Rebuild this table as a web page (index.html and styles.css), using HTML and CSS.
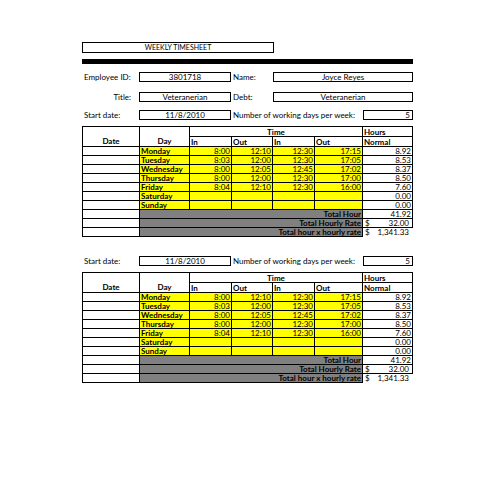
FILE: index.html
```html
<!DOCTYPE html>
<html>
<head>
<meta charset="utf-8">
<link rel="stylesheet" href="styles.css">
</head>
<body>
<div class="sheet">
  <div class="title-box">WEEKLY TIMESHEET</div>
  <div class="bar"></div>

  <div class="info info-a">
    <div class="lbl">Employee ID:</div>
    <div class="box">3801718</div>
    <div class="lbl lbl2">Name:</div>
    <div class="box">Joyce Reyes</div>
  </div>
  <div class="info info-a gap-title">
    <div class="lbl right">Title:</div>
    <div class="box">Veteranerian</div>
    <div class="lbl lbl2">Debt:</div>
    <div class="box">Veteranerian</div>
  </div>
  <div class="info info-b gap-start">
    <div class="lbl">Start date:</div>
    <div class="box">11/8/2010</div>
    <div class="lbl lbl2">Number of working days per week:</div>
    <div class="box num">5</div>
  </div>

  <div class="ts">
    <div class="c hd date-h">Date</div>
    <div class="c hd day-h">Day</div>
    <div class="c hd time-h">Time</div>
    <div class="c hd left">Hours</div>
    <div class="c hd left">In</div>
    <div class="c hd left">Out</div>
    <div class="c hd left">In</div>
    <div class="c hd left">Out</div>
    <div class="c hd left">Normal</div>

    <div class="c"></div><div class="c y day">Monday</div><div class="c y n">8:00</div><div class="c y n">12:10</div><div class="c y n">12:30</div><div class="c y n">17:15</div><div class="c n">8.92</div>
    <div class="c"></div><div class="c y day">Tuesday</div><div class="c y n">8:03</div><div class="c y n">12:00</div><div class="c y n">12:30</div><div class="c y n">17:05</div><div class="c n">8.53</div>
    <div class="c"></div><div class="c y day">Wednesday</div><div class="c y n">8:00</div><div class="c y n">12:05</div><div class="c y n">12:45</div><div class="c y n">17:02</div><div class="c n">8.37</div>
    <div class="c"></div><div class="c y day">Thursday</div><div class="c y n">8:00</div><div class="c y n">12:00</div><div class="c y n">12:30</div><div class="c y n">17:00</div><div class="c n">8.50</div>
    <div class="c"></div><div class="c y day">Friday</div><div class="c y n">8:04</div><div class="c y n">12:10</div><div class="c y n">12:30</div><div class="c y n">16:00</div><div class="c n">7.60</div>
    <div class="c"></div><div class="c y day">Saturday</div><div class="c y"></div><div class="c y"></div><div class="c y"></div><div class="c y"></div><div class="c n">0.00</div>
    <div class="c"></div><div class="c y day">Sunday</div><div class="c y"></div><div class="c y"></div><div class="c y"></div><div class="c y"></div><div class="c n">0.00</div>

    <div class="c"></div><div class="c g">Total Hour</div><div class="c n pr">41.92</div>
    <div class="c"></div><div class="c g">Total Hourly Rate</div><div class="c acc"><span>$</span><span>32.00</span></div>
    <div class="c"></div><div class="c g">Total hour x hourly rate</div><div class="c acc nob"><span>$</span><span>1,341.33</span></div>
  </div>

  <div class="info info-b gap-start2">
    <div class="lbl">Start date:</div>
    <div class="box">11/8/2010</div>
    <div class="lbl lbl2">Number of working days per week:</div>
    <div class="box num">5</div>
  </div>

  <div class="ts">
    <div class="c hd date-h">Date</div>
    <div class="c hd day-h">Day</div>
    <div class="c hd time-h">Time</div>
    <div class="c hd left">Hours</div>
    <div class="c hd left">In</div>
    <div class="c hd left">Out</div>
    <div class="c hd left">In</div>
    <div class="c hd left">Out</div>
    <div class="c hd left">Normal</div>

    <div class="c"></div><div class="c y day">Monday</div><div class="c y n">8:00</div><div class="c y n">12:10</div><div class="c y n">12:30</div><div class="c y n">17:15</div><div class="c n">8.92</div>
    <div class="c"></div><div class="c y day">Tuesday</div><div class="c y n">8:03</div><div class="c y n">12:00</div><div class="c y n">12:30</div><div class="c y n">17:05</div><div class="c n">8.53</div>
    <div class="c"></div><div class="c y day">Wednesday</div><div class="c y n">8:00</div><div class="c y n">12:05</div><div class="c y n">12:45</div><div class="c y n">17:02</div><div class="c n">8.37</div>
    <div class="c"></div><div class="c y day">Thursday</div><div class="c y n">8:00</div><div class="c y n">12:00</div><div class="c y n">12:30</div><div class="c y n">17:00</div><div class="c n">8.50</div>
    <div class="c"></div><div class="c y day">Friday</div><div class="c y n">8:04</div><div class="c y n">12:10</div><div class="c y n">12:30</div><div class="c y n">16:00</div><div class="c n">7.60</div>
    <div class="c"></div><div class="c y day">Saturday</div><div class="c y"></div><div class="c y"></div><div class="c y"></div><div class="c y"></div><div class="c n">0.00</div>
    <div class="c"></div><div class="c y day">Sunday</div><div class="c y"></div><div class="c y"></div><div class="c y"></div><div class="c y"></div><div class="c n">0.00</div>

    <div class="c"></div><div class="c g">Total Hour</div><div class="c n pr">41.92</div>
    <div class="c"></div><div class="c g">Total Hourly Rate</div><div class="c acc"><span>$</span><span>32.00</span></div>
    <div class="c"></div><div class="c g">Total hour x hourly rate</div><div class="c acc nob"><span>$</span><span>1,341.33</span></div>
  </div>
</div>
</body>
</html>
```

FILE: styles.css
```css
html, body {
  margin: 0;
  padding: 0;
  background: #ffffff;
}
body {
  font-family: Lato, "Liberation Sans", sans-serif;
  font-size: 8px;
  color: #000;
}
.sheet {
  margin-left: 82px;
  padding-top: 42px;
  width: 331px;
}
.title-box {
  box-sizing: border-box;
  width: 192px;
  height: 11px;
  border: 1px solid #000;
  text-align: center;
  font-size: 7px;
  line-height: 9px;
}
.bar {
  margin-top: 6px;
  height: 5px;
  background: #000;
}
.info {
  display: grid;
  height: 10px;
  margin-top: 8px;
}
.info-a { grid-template-columns: 57px 92px 42px 140px; }
.info-b { grid-template-columns: 57px 92px 132px 50px; }
.gap-title { margin-top: 10px; }
.gap-start { margin-top: 8px; }
.gap-start2 { margin-top: 19px; }
.lbl {
  line-height: 10px;
  padding-left: 2px;
  white-space: nowrap;
}
.lbl.right {
  text-align: right;
  padding: 0 8px 0 0;
}
.lbl2 { padding-left: 2px; }
.box {
  box-sizing: border-box;
  border: 1px solid #000;
  text-align: center;
  line-height: 8px;
}
.box.num {
  text-align: right;
  padding-right: 2px;
}
.ts {
  display: grid;
  grid-template-columns: 57px 50px 42px 41px 42px 48px 50px;
  grid-template-rows: 10px 10px repeat(10, 9px);
  border-top: 1px solid #000;
  border-left: 1px solid #000;
  margin-top: 6px;
  width: 331px;
  box-sizing: border-box;
}
.c {
  box-sizing: border-box;
  border-right: 1px solid #000;
  border-bottom: 1px solid #000;
  display: flex;
  align-items: center;
  padding: 0 1px;
  white-space: nowrap;
  overflow: hidden;
  line-height: 8px;
}
.hd { font-weight: bold; }
.left { justify-content: flex-start; }
.date-h {
  grid-row: 1 / 3;
  grid-column: 1;
  align-items: flex-end;
  justify-content: center;
  padding-bottom: 1px;
}
.day-h {
  grid-row: 1 / 3;
  grid-column: 2;
  align-items: flex-end;
  justify-content: center;
  padding-bottom: 1px;
}
.time-h {
  grid-column: 3 / 7;
  justify-content: center;
}
.y { background: #ffff00; }
.day { font-weight: bold; }
.n { justify-content: flex-end; }
.pr { padding-right: 1px; }
.g {
  grid-column: 2 / 7;
  background: #808080;
  font-weight: bold;
  justify-content: flex-end;
}
.acc {
  justify-content: space-between;
  padding: 0 3px 0 2px;
}
.nob {
  border-right-color: transparent;
  border-bottom-color: transparent;
}
```
